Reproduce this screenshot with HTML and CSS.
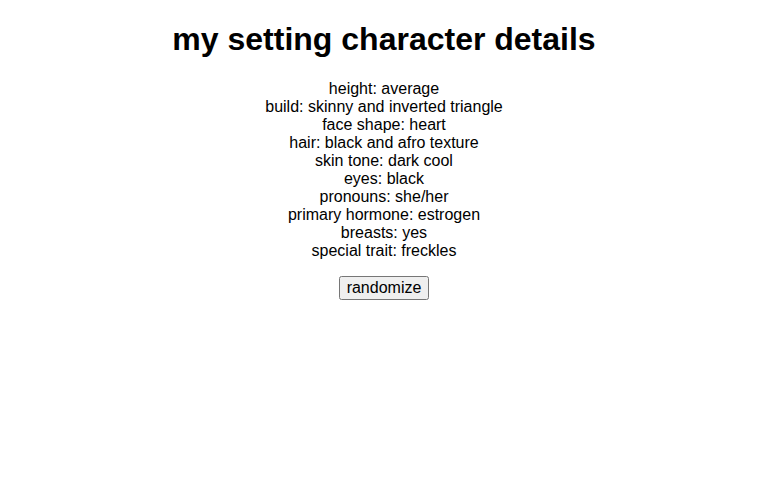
FILE: index.html
```html
<!DOCTYPE html>
<html>
<head>
    <title>character details</title>
    <link rel="stylesheet" href="styles.css">
</head>
<body>
<h1>my setting character details</h1>
<div class="details">
    <div>height: average</div>
    <div>build: skinny and inverted triangle</div>
    <div>face shape: heart</div>
    <div>hair: black and afro texture</div>
    <div>skin tone: dark cool</div>
    <div>eyes: black</div>
    <div>pronouns: she/her</div>
    <div>primary hormone: estrogen</div>
    <div>breasts: yes</div>
    <div>special trait: freckles</div>
</div>
<p><button id="randomize">randomize</button></p>
</body>
</html>
```

FILE: styles.css
```css
body {
    margin: 0 8px;
    font-family: "Liberation Sans", Arial, sans-serif;
    font-size: 16px;
    text-align: center;
}
h1 {
    font-size: 32px;
    margin: 0.67em 0;
}
.details {
    line-height: 18px;
}
button {
    font-family: inherit;
    font-size: 16px;
}
```
